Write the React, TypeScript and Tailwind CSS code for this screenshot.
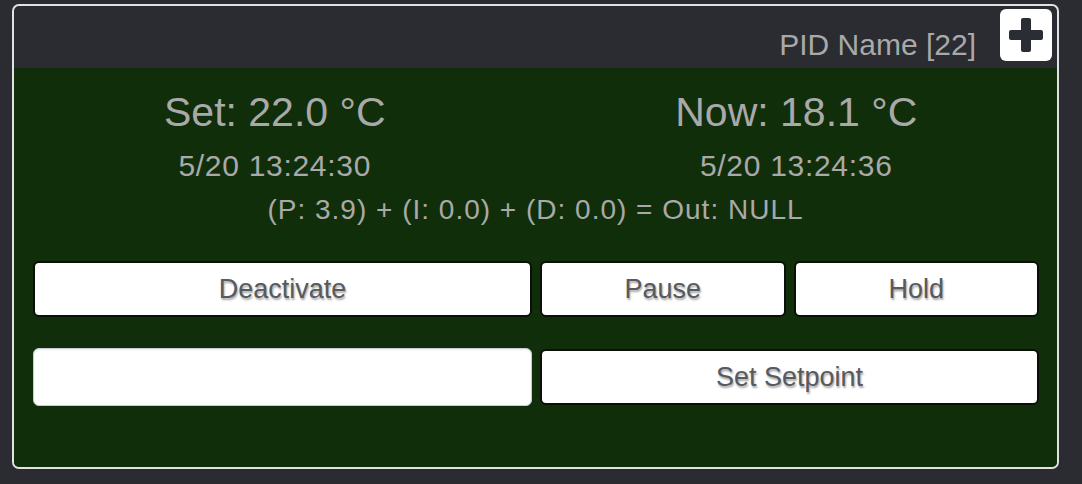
import React from "react";

function PlusIcon() {
  return (
    <svg width="36" height="36" viewBox="0 0 36 36">
      <rect x="13" y="1" width="10" height="34" rx="2" fill="#2a2d33" />
      <rect x="1" y="13" width="34" height="10" rx="2" fill="#2a2d33" />
    </svg>
  );
}

const btn =
  "h-[56px] bg-white border-2 border-[#0a0f08] rounded-[6px] flex items-center justify-center text-[27px] leading-none text-[#575a5e] [text-shadow:1px_2px_2px_rgba(0,0,0,0.35)]";

export default function App() {
  return (
    <div
      className="w-[1082px] h-[484px] bg-[#2a2c31] pt-[4px] pl-[12px]"
      style={{ fontFamily: '"Liberation Sans", Arial, sans-serif' }}
    >
      <div className="w-[1047px] h-[465px] border-2 border-[#e2e2e2] rounded-[7px] overflow-hidden flex flex-col bg-[#2a2c31]">
        <div className="h-[62px] flex justify-end items-start pr-[5px] shrink-0">
          <div className="mt-[24px] mr-[24px] text-[30px] leading-none text-[#a9a9a9]">
            PID Name [22]
          </div>
          <div className="mt-[3px] w-[52px] h-[52px] bg-white rounded-[6px] flex items-center justify-center">
            <PlusIcon />
          </div>
        </div>
        <div className="flex-1 bg-[#112e0b] flex flex-col">
          <div className="grid grid-cols-2 mt-[24px] text-[#a9a9a9]">
            <div className="text-center text-[41px] leading-none">Set: 22.0 °C</div>
            <div className="text-center text-[41px] leading-none">Now: 18.1 °C</div>
          </div>
          <div className="grid grid-cols-2 mt-[18px] text-[#a9a9a9]">
            <div className="text-center text-[30px] leading-none tracking-[0.7px]">5/20 13:24:30</div>
            <div className="text-center text-[30px] leading-none tracking-[0.7px]">5/20 13:24:36</div>
          </div>
          <div className="mt-[15px] text-center text-[28px] leading-none tracking-[1px] text-[#a9a9a9]">
            (P: 3.9) + (I: 0.0) + (D: 0.0) = Out: NULL
          </div>
          <div className="mt-[37px] pl-[19px] pr-[18px] grid grid-cols-4 gap-x-[8px] gap-y-[31px] items-center">
            <div className={`${btn} col-span-2`}>Deactivate</div>
            <div className={btn}>Pause</div>
            <div className={btn}>Hold</div>
            <input
              type="text"
              className="col-span-2 h-[58px] bg-white border border-[#c9ccd0] rounded-[6px] shadow-[inset_0_1px_2px_rgba(0,0,0,0.08)] outline-none px-3"
            />
            <div className={`${btn} col-span-2`}>Set Setpoint</div>
          </div>
        </div>
      </div>
    </div>
  );
}
